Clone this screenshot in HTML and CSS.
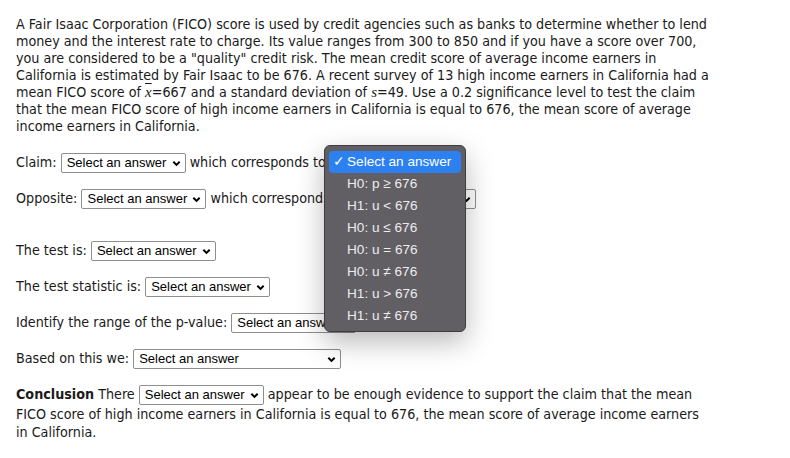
FILE: index.html
```html
<!DOCTYPE html>
<html lang="en">
<head>
  <meta charset="UTF-8">
  <title>Hypothesis Test</title>
  <link rel="stylesheet" href="styles.css">
</head>
<body>
  <div class="question">
    <p class="intro">A Fair Isaac Corporation (FICO) score is used by credit agencies such as banks to determine whether to lend money and the interest rate to charge. Its value ranges from 300 to 850 and if you have a score over 700, you are considered to be a "quality" credit risk. The mean credit score of average income earners in California is estimated by Fair Isaac to be 676. A recent survey of 13 high income earners in California had a mean FICO score of <i class="math bar">x</i>=667 and a standard deviation of <i class="math">s</i>=49. Use a 0.2 significance level to test the claim that the mean FICO score of high income earners in California is equal to 676, the mean score of average income earners in California.</p>

    <p class="row">Claim: <span class="sel">Select an answer <svg viewBox="0 0 10 7"><path d="M1.5 1.5 L5 5 L8.5 1.5"/></svg></span> which corresponds to <span class="sel">Select an answer <svg viewBox="0 0 10 7"><path d="M1.5 1.5 L5 5 L8.5 1.5"/></svg></span></p>

    <p class="row">Opposite: <span class="sel">Select an answer <svg viewBox="0 0 10 7"><path d="M1.5 1.5 L5 5 L8.5 1.5"/></svg></span> which corresponds to <span class="sel">Select an answer <svg viewBox="0 0 10 7"><path d="M1.5 1.5 L5 5 L8.5 1.5"/></svg></span></p>

    <p class="row spaced">The test is: <span class="sel">Select an answer <svg viewBox="0 0 10 7"><path d="M1.5 1.5 L5 5 L8.5 1.5"/></svg></span></p>

    <p class="row">The test statistic is: <span class="sel">Select an answer <svg viewBox="0 0 10 7"><path d="M1.5 1.5 L5 5 L8.5 1.5"/></svg></span></p>

    <p class="row">Identify the range of the p-value: <span class="sel">Select an answer <svg viewBox="0 0 10 7"><path d="M1.5 1.5 L5 5 L8.5 1.5"/></svg></span></p>

    <p class="row">Based on this we: <span class="sel wide">Select an answer <svg viewBox="0 0 10 7"><path d="M1.5 1.5 L5 5 L8.5 1.5"/></svg></span></p>

    <p class="row conclusion"><b>Conclusion</b> There <span class="sel">Select an answer <svg viewBox="0 0 10 7"><path d="M1.5 1.5 L5 5 L8.5 1.5"/></svg></span> appear to be enough evidence to support the claim that the mean FICO score of high income earners in California is equal to 676, the mean score of average income earners in California.</p>

    <button class="submit">Submit</button>
  </div>

  <ul class="menu">
    <li class="active"><span class="check">&#10003;</span>Select an answer</li>
    <li>H0: p &ge; 676</li>
    <li>H1: u &lt; 676</li>
    <li>H0: u &le; 676</li>
    <li>H0: u = 676</li>
    <li>H0: u &ne; 676</li>
    <li>H1: u &gt; 676</li>
    <li>H1: u &ne; 676</li>
  </ul>
</body>
</html>
```

FILE: styles.css
```css
body {
  margin: 0;
  background: #fff;
  color: #1a1a1a;
  font-family: "DejaVu Sans Condensed", "DejaVu Sans", sans-serif;
  font-size: 14.2px;
}

.question {
  width: 697px;
  padding: 16px 0 0 16px;
}

.intro {
  margin: 0 0 16px;
  line-height: 17px;
}

.math {
  font-family: "Liberation Serif", serif;
  font-size: 15px;
}

.bar {
  text-decoration: overline;
}

.row {
  margin: 0 0 14px;
  line-height: 22px;
}

.row.spaced {
  margin-top: 30px;
}

.conclusion {
  margin-top: 16px;
  line-height: 18px;
}

.sel {
  display: inline-flex;
  align-items: center;
  justify-content: space-between;
  box-sizing: border-box;
  width: 125px;
  height: 20px;
  padding: 0 4px 0 5px;
  border: 1px solid #8e8e8e;
  border-radius: 2px;
  font-family: "Liberation Sans", Arial, sans-serif;
  font-size: 13px;
  color: #000;
  vertical-align: middle;
  line-height: 18px;
}

.sel.wide {
  width: 208px;
}

.sel svg {
  width: 9px;
  height: 7px;
  fill: none;
  stroke: #000;
  stroke-width: 2.2;
}

.submit {
  margin-top: 17px;
  width: 128px;
  height: 24px;
  border: 1px solid #c8c8c8;
  border-radius: 4px;
  background: #f4f4f4;
}

.menu {
  position: absolute;
  left: 324px;
  top: 145px;
  width: 142px;
  box-sizing: border-box;
  margin: 0;
  padding: 5px 4px 4px;
  list-style: none;
  background: #615e64;
  border: 1px solid #3e3c40;
  border-radius: 6px;
  box-shadow: 0 10px 28px rgba(0, 0, 0, 0.28);
  font-family: "Liberation Sans", Arial, sans-serif;
  font-size: 13.6px;
  color: #ececec;
}

.menu li {
  height: 22px;
  line-height: 22px;
  padding-left: 18px;
  border-radius: 4px;
  white-space: nowrap;
}

.menu li.active {
  padding-left: 4px;
  background: #2c80f0;
  color: #fff;
}

.menu .check {
  display: inline-block;
  width: 14px;
}
```
